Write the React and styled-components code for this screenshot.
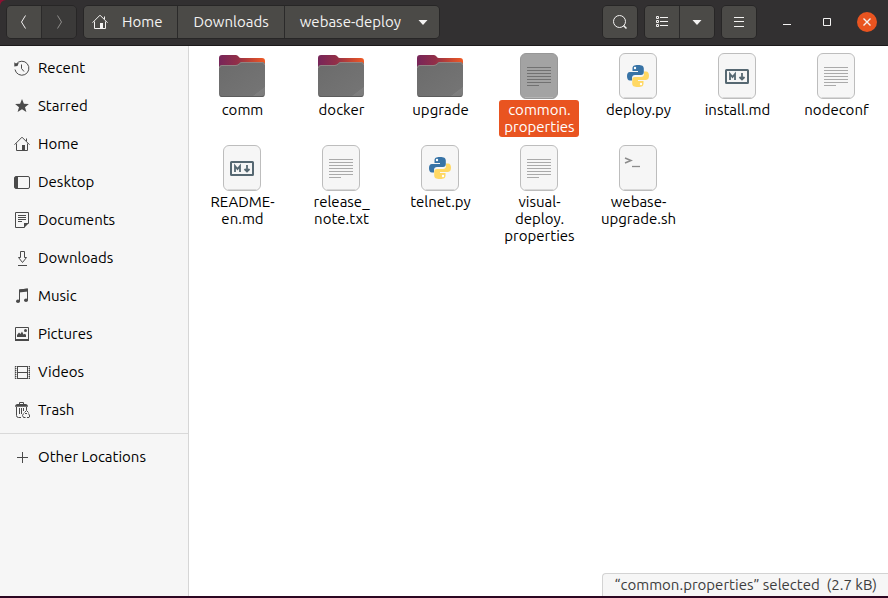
import React from "react";
import styled, { createGlobalStyle } from "styled-components";

const GlobalStyle = createGlobalStyle`
  * { box-sizing: border-box; }
  body {
    margin: 0;
    background: #ffffff;
    color: #000000;
    font: 15px/17px Ubuntu, "Noto Sans", "Open Sans", sans-serif;
  }
  button { font: inherit; color: inherit; cursor: default; }
  svg { display: block; flex: none; }
`;

const Window = styled.div`
  display: flex;
  flex-direction: column;
  min-height: 100vh;
  border-bottom: 2px solid #2c0722;
`;

const HeaderFrame = styled.div`
  background: #8c1132;
`;

const HeaderBar = styled.header`
  display: flex;
  align-items: center;
  gap: 6px;
  height: 46px;
  padding: 0 11px 2px 6px;
  border-bottom: 1px solid #1c1a1b;
  border-top-left-radius: 6px;
  background: #323031;
  color: #f4f3f2;
`;

const ButtonGroup = styled.div`
  display: flex;
  height: 34px;
  border: 1px solid #272626;
  border-radius: 5px;
  overflow: hidden;
`;

const HeaderButton = styled.button`
  display: flex;
  align-items: center;
  justify-content: center;
  gap: 14px;
  min-width: 34px;
  padding: ${(p) => (p.$text ? "0 15px" : "0")};
  padding-left: ${(p) => (p.$leadingIcon ? "8px" : null)};
  padding-right: ${(p) => (p.$trailingIcon ? "8px" : null)};
  border: 0;
  background: ${(p) => (p.disabled ? "#3b3a39" : "#4b4a47")};
  color: ${(p) => (p.disabled ? "#8f8e8c" : "#f4f3f2")};
  & + & { border-left: 1px solid #2b2a2a; min-width: 35px; }
`;

const Spacer = styled.div`
  flex: 1;
`;

const WindowControls = styled.div`
  display: flex;
  align-items: center;
  gap: 20px;
  margin-left: 14px;
`;

const ControlButton = styled.button`
  display: grid;
  place-items: center;
  width: 20px;
  height: 20px;
  padding: 0;
  border: 0;
  border-radius: 50%;
  background: ${(p) => (p.$close ? "#e95420" : "transparent")};
`;

const Body = styled.div`
  display: flex;
  flex: 1;
`;

const Sidebar = styled.nav`
  width: 189px;
  flex: none;
  padding-top: 3px;
  border-right: 1px solid #d6d6d6;
  background: #f6f6f6;
`;

const PlaceList = styled.ul`
  margin: 0;
  padding: 0;
  list-style: none;
  & + & {
    margin-top: 4px;
    padding-top: 4px;
    border-top: 1px solid #d9d9d9;
  }
`;

const PlaceLink = styled.a`
  display: flex;
  align-items: center;
  gap: 8px;
  height: 38px;
  padding: 0 14px;
  color: inherit;
  text-decoration: none;
  svg { color: #4a4a4a; }
`;

const PlaceName = styled.span`
  padding-bottom: 2px;
`;

const Content = styled.main`
  display: flex;
  flex: 1;
  flex-direction: column;
  justify-content: space-between;
  background: #ffffff;
`;

const FileGrid = styled.ul`
  display: grid;
  grid-template-columns: repeat(auto-fill, minmax(99px, 1fr));
  grid-auto-rows: minmax(84px, auto);
  row-gap: 8px;
  margin: 0;
  padding: 7px 3px 0;
  list-style: none;
`;

const FileItem = styled.li`
  display: flex;
  justify-content: center;
`;

const FileButton = styled.button`
  display: flex;
  flex-direction: column;
  align-items: center;
  padding: 0;
  border: 0;
  background: none;
`;

const FileArt = styled.span`
  height: 47px;
`;

const FileName = styled.span`
  width: 80px;
  padding: 1px 1px 2px 3px;
  border-radius: 3px;
  text-align: center;
  background: ${(p) => (p.$selected ? "#e95420" : "transparent")};
  color: ${(p) => (p.$selected ? "#ffffff" : "inherit")};
`;

const StatusBar = styled.output`
  align-self: flex-end;
  padding: 2px 11px 3px 12px;
  border: 1px solid #d3d3d3;
  border-width: 1px 0 0 1px;
  border-top-left-radius: 4px;
  background: #f6f6f6;
  color: #3d3d3d;
  white-space: pre;
`;

const Icon = ({ children }) => (
  <svg width="16" height="16" viewBox="0 0 16 16" fill="none" stroke="currentColor" aria-hidden="true">
    {children}
  </svg>
);

const HomeIcon = () => (
  <Icon>
    <path d="M.5 8.7 8 1.2l7.5 7.5M2.5 7.5v7h11v-7M12.5 5V2.5" />
    <path d="M8 9h3v6H8z" fill="currentColor" stroke="none" />
  </Icon>
);
const RecentIcon = () => (
  <Icon>
    <path d="M2.3 4A7 7 0 1 1 1 9.5" />
    <path d="M7.5 4.5v4l2.5 3" />
    <path d="M.3 6.5V2.2L2 3.4 4.8 2.8 3.5 6z" fill="currentColor" stroke="none" />
  </Icon>
);
const StarIcon = () => (
  <Icon>
    <path d="m8 1 1.9 4.8 5 .2L11 9.2l1.4 4.9L8 11.3l-4.4 2.8L5 9.2 1.1 6l5-.2z" fill="currentColor" stroke="none" />
  </Icon>
);
const DesktopIcon = () => (
  <Icon>
    <rect x=".5" y="2.5" width="15" height="12" rx="1.5" />
    <path d="M1 3h3v11H1z" fill="currentColor" stroke="none" />
  </Icon>
);
const DocumentsIcon = () => (
  <Icon>
    <path d="M10.5 15.5h-9V.5h13v11M4 3.5h8M4 5.5h8M4 7.5h8M4 9.5h4" />
    <path d="M10 16v-5h5z" fill="currentColor" stroke="none" />
  </Icon>
);
const DownloadsIcon = () => (
  <Icon>
    <path d="M6.5 1.5h4v6h2L8.5 12.5l-4-5h2zM4 15.5h9" />
  </Icon>
);
const MusicIcon = () => (
  <Icon>
    <path d="M5.5 13V2l8-1v11" />
    <path d="M5 1.5 14 .4v3L5 4.5z" fill="currentColor" stroke="none" />
    <ellipse cx="4" cy="13.3" rx="2" ry="1.7" fill="currentColor" stroke="none" />
    <ellipse cx="12" cy="12.3" rx="2" ry="1.7" fill="currentColor" stroke="none" />
  </Icon>
);
const PicturesIcon = () => (
  <Icon>
    <path d="M1.5 1.5h13v13h-13z" />
    <path d="M1 13h14v2H1zM3 11V9l2-2.5L6.5 8 8 5.5l1.5 3 1.5-.8L12 9v2z" fill="currentColor" stroke="none" />
    <circle cx="11.5" cy="4.5" r="1.5" fill="currentColor" stroke="none" />
  </Icon>
);
const VideosIcon = () => (
  <Icon>
    <path d="M3.5 2v13M13.5 2v13M3 2.5h11M3 8.5h11M3 14.5h11" />
    <path d="M1.7 2v13M15.3 2v13" strokeWidth="1.4" strokeDasharray="1 1" />
    <path d="M1.3 2v13M15.7 2v13" strokeWidth=".6" />
  </Icon>
);
const TrashIcon = () => (
  <Icon>
    <path d="M5.5 2V.5h4V2M2.5 5v8.5q0 2 2 2H7M12.5 5v3" />
    <path d="M1 4.8Q1.2 2 3.5 2h8Q13.8 2 14 4.8z" fill="currentColor" stroke="none" />
    <path d="M5.5 6v6M7.5 6v6M9.5 6v3" />
    <path d="m10.5 10.5 2-2 2 2M9.5 11.5l-1 2 1 2h2m1.5 0h2l.8-1.5-1.3-2.5M11 11.5h2" />
  </Icon>
);
const PlusIcon = () => (
  <Icon>
    <path d="M8.5 3v11M3 8.5h11" />
  </Icon>
);
const SearchIcon = () => (
  <Icon>
    <circle cx="7.5" cy="7.5" r="6" />
    <path d="m11.5 11.5 3 3" strokeWidth="1.5" />
  </Icon>
);
const ListIcon = () => (
  <Icon>
    <path d="M2.5 2.5h2v2h-2zM2.5 6.5h2v2h-2zM2.5 10.5h2v2h-2zM6 3.5h8M6 7.5h8M6 11.5h8" />
  </Icon>
);
const MenuIcon = () => (
  <Icon>
    <path d="M3 3.5h10M3 7.5h10M3 12.5h10" />
  </Icon>
);
const CaretIcon = () => (
  <Icon>
    <path d="M3.5 6h9L8 11z" fill="currentColor" stroke="none" />
  </Icon>
);
const BackIcon = () => (
  <Icon>
    <path d="m9.5 1.5-4 6.5 4 6.5" />
  </Icon>
);
const ForwardIcon = () => (
  <Icon>
    <path d="m6.5 1.5 4 6.5-4 6.5" />
  </Icon>
);
const MinimizeIcon = () => (
  <Icon>
    <path d="M4 10.5h8" />
  </Icon>
);
const MaximizeIcon = () => (
  <Icon>
    <path d="M4.5 4.5h7v7h-7z" />
  </Icon>
);
const CloseIcon = () => (
  <Icon>
    <path d="m4.5 4.5 7 7m0-7-7 7" strokeWidth="1.4" />
  </Icon>
);

const FolderArt = () => (
  <svg width="46" height="46" viewBox="0 0 46 46" aria-hidden="true">
    <defs>
      <linearGradient id="folderBack" x1="0" x2="1">
        <stop offset="0" stopColor="#77265a" />
        <stop offset=".4" stopColor="#922f48" />
        <stop offset=".65" stopColor="#bb4037" />
        <stop offset="1" stopColor="#f05a24" />
      </linearGradient>
      <linearGradient id="folderFront" x1="0" y1="0" x2="1" y2="1">
        <stop offset="0" stopColor="#6b6b6b" />
        <stop offset=".85" stopColor="#747474" />
        <stop offset=".86" stopColor="#7e7e7e" />
        <stop offset="1" stopColor="#7b7b7b" />
      </linearGradient>
    </defs>
    <path d="M0 5q0-3 3-3h14q1.5 0 2.5 1.5T22 5h21q3 0 3 3v12H0z" fill="url(#folderBack)" />
    <path d="M0 15q0-3 3-3h14q2 0 3.2-1.7T23 9h20q3 0 3 3v29q0 3-3 3H3q-3 0-3-3z" fill="url(#folderFront)" />
    <path d="M.5 15q0-2.5 2.5-2.5h14q2 0 3.5-1.7T23 9.5h20q2.5 0 2.5 2.5" fill="none" stroke="#908484" />
    <path d="M1 42.5q.7 1 2 1h40q1.3 0 2-1" fill="none" stroke="#5c5c5c" />
  </svg>
);

const Sheet = ({ selected, children }) => (
  <svg width="38" height="46" viewBox="0 0 38 46" aria-hidden="true">
    <rect x=".5" y=".5" width="37" height="45" rx="5.5" fill={selected ? "#a3a3a3" : "#f6f6f6"} stroke={selected ? "#979797" : "#bdbdbd"} />
    <path d="M5 44.5h28" stroke={selected ? "#b4b4b4" : "#d9d9d9"} />
    {children}
  </svg>
);
const TextArt = ({ selected }) => (
  <Sheet selected={selected}>
    <path
      d="M7 14.5h24M7 17.5h24M7 20.5h24M7 23.5h24M7 26.5h24M7 29.5h24M7 32.5h12"
      stroke={selected ? "#717171" : "#aaaaaa"}
    />
  </Sheet>
);
const SNAKE =
  "M19 12c-4 0-5.500 1-5.500 3.500V18H19v1h-8c-2.200 0-3 2-3 4.200s.8 4.300 3 4.300h2V25c0-2 1.200-3 3-3h6c1.800 0 2.800-1 2.800-3v-3.500c0-2.500-1.800-3.500-5.800-3.500z";
const PythonArt = () => (
  <Sheet>
    <path d={SNAKE} fill="#3773a6" />
    <path d={SNAKE} fill="#ffd863" transform="rotate(180 19 23)" />
    <circle cx="16" cy="15" r="1.2" fill="#fff" />
    <circle cx="22" cy="31" r="1.2" fill="#fff" />
  </Sheet>
);
const MarkdownArt = () => (
  <Sheet>
    <rect x="8" y="17" width="22" height="13" rx=".5" fill="none" stroke="#566872" strokeWidth="2" />
    <path d="M12 27v-6l2.5 3 2.5-3v6M24 20v6M21.5 24l2.5 2.5 2.5-2.5" fill="none" stroke="#566872" strokeWidth="1.8" />
  </Sheet>
);
const ShellArt = () => (
  <Sheet>
    <path d="m6 13 6 2.5L6 18" fill="none" stroke="#8c8c8c" strokeWidth="1.5" />
    <path d="M13 21.5h8" stroke="#8c8c8c" strokeWidth="1.3" />
  </Sheet>
);

const ART = { folder: FolderArt, text: TextArt, python: PythonArt, markdown: MarkdownArt, shell: ShellArt };

const PLACES = [
  ["Recent", RecentIcon],
  ["Starred", StarIcon],
  ["Home", HomeIcon],
  ["Desktop", DesktopIcon],
  ["Documents", DocumentsIcon],
  ["Downloads", DownloadsIcon],
  ["Music", MusicIcon],
  ["Pictures", PicturesIcon],
  ["Videos", VideosIcon],
  ["Trash", TrashIcon],
];

const FILES = [
  { parts: ["comm"], kind: "folder" },
  { parts: ["docker"], kind: "folder" },
  { parts: ["upgrade"], kind: "folder" },
  { parts: ["common.", "properties"], kind: "text", selected: true },
  { parts: ["deploy.py"], kind: "python" },
  { parts: ["install.md"], kind: "markdown" },
  { parts: ["nodeconf"], kind: "text" },
  { parts: ["README-", "en.md"], kind: "markdown" },
  { parts: ["release_", "note.txt"], kind: "text" },
  { parts: ["telnet.py"], kind: "python" },
  { parts: ["visual-", "deploy.", "properties"], kind: "text" },
  { parts: ["webase-", "upgrade.sh"], kind: "shell" },
];

function Place({ label, icon: PlaceIcon }) {
  return (
    <li>
      <PlaceLink href="#">
        <PlaceIcon />
        <PlaceName>{label}</PlaceName>
      </PlaceLink>
    </li>
  );
}

function File({ parts, kind, selected }) {
  const Art = ART[kind];
  return (
    <FileItem>
      <FileButton type="button" aria-pressed={!!selected}>
        <FileArt>
          <Art selected={selected} />
        </FileArt>
        <FileName $selected={selected}>
          {parts.map((part, i) => (
            <React.Fragment key={part}>
              {i > 0 && <wbr />}
              {part}
            </React.Fragment>
          ))}
        </FileName>
      </FileButton>
    </FileItem>
  );
}

export default function App() {
  return (
    <Window>
      <GlobalStyle />
      <HeaderFrame>
        <HeaderBar>
          <ButtonGroup>
            <HeaderButton aria-label="Back"><BackIcon /></HeaderButton>
            <HeaderButton aria-label="Forward" disabled><ForwardIcon /></HeaderButton>
          </ButtonGroup>
          <ButtonGroup>
            <HeaderButton $text $leadingIcon><HomeIcon />Home</HeaderButton>
            <HeaderButton $text>Downloads</HeaderButton>
            <HeaderButton $text $trailingIcon>webase-deploy<CaretIcon /></HeaderButton>
          </ButtonGroup>
          <Spacer />
          <ButtonGroup>
            <HeaderButton aria-label="Search"><SearchIcon /></HeaderButton>
          </ButtonGroup>
          <ButtonGroup>
            <HeaderButton aria-label="List view"><ListIcon /></HeaderButton>
            <HeaderButton aria-label="View options"><CaretIcon /></HeaderButton>
          </ButtonGroup>
          <ButtonGroup>
            <HeaderButton aria-label="Menu"><MenuIcon /></HeaderButton>
          </ButtonGroup>
          <WindowControls>
            <ControlButton aria-label="Minimize"><MinimizeIcon /></ControlButton>
            <ControlButton aria-label="Maximize"><MaximizeIcon /></ControlButton>
            <ControlButton aria-label="Close" $close><CloseIcon /></ControlButton>
          </WindowControls>
        </HeaderBar>
      </HeaderFrame>
      <Body>
        <Sidebar aria-label="Places">
          <PlaceList>
            {PLACES.map(([label, icon]) => (
              <Place key={label} label={label} icon={icon} />
            ))}
          </PlaceList>
          <PlaceList>
            <Place label="Other Locations" icon={PlusIcon} />
          </PlaceList>
        </Sidebar>
        <Content>
          <FileGrid>
            {FILES.map((file) => (
              <File key={file.parts.join("")} {...file} />
            ))}
          </FileGrid>
          <StatusBar>{"“common.properties” selected  (2.7 kB)"}</StatusBar>
        </Content>
      </Body>
    </Window>
  );
}
